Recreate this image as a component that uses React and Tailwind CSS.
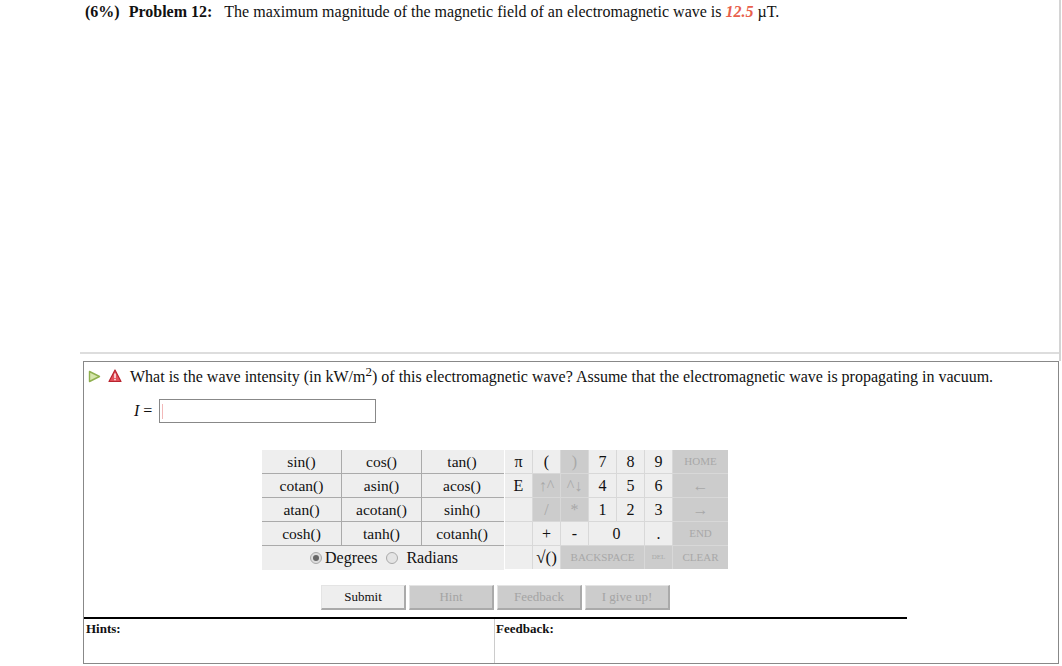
import React from 'react';

const funcs = ['sin()', 'cos()', 'tan()', 'cotan()', 'asin()', 'acos()', 'atan()', 'acotan()', 'sinh()', 'cosh()', 'tanh()', 'cotanh()'];

const onCell = 'flex items-center justify-center bg-[#eeeeee] text-[#111]';
const offCell = 'flex items-center justify-center bg-[#cccccc] text-[#a8a8a8]';

const Key = ({ off, className = '', children }) => (
  <div className={`${off ? offCell : onCell} ${className}`}>{children}</div>
);

const ActionButton = ({ off, children }) => (
  <div
    className={`w-[85px] h-[25px] flex items-center justify-center text-[13px] border-t border-l border-t-[#e4e4e4] border-l-[#e4e4e4] border-b-2 border-r-2 border-b-[#aaa] border-r-[#aaa] ${
      off ? 'bg-[#cccccc] text-[#a4a4a4]' : 'bg-[#eeeeee] text-[#111]'
    }`}
  >
    {children}
  </div>
);

const App = () => {
  return (
    <div className="w-[1062px] h-[666px] overflow-hidden bg-white text-[#111] font-['Liberation_Serif',serif] text-[16px]">
      <div className="w-[1061px] border-r-2 border-[#d4d4d4]">
        <div className="h-[352px] pl-[85px] pt-[3px] leading-[18px] whitespace-nowrap">
          <b>(6%)</b>
          <b className="ml-[9px]">Problem 12:</b>
          <span className="ml-[12px]">The maximum magnitude of the magnetic field of an electromagnetic wave is </span>
          <i className="text-[#e8604c] font-bold">12.5</i> µT.
        </div>
        <div className="ml-[80px] h-[2px] bg-[#dddddd]" />
        <div className="h-[7px]" />
      </div>

      <div className="ml-[83px] w-[976px] h-[303px] border border-[#888888] flex flex-col">
        <div className="flex items-start pt-[6px] h-[37px]">
          <svg className="ml-[4px] mt-[2px]" width="13" height="13" viewBox="0 0 13 13">
            <path d="M1.5 1.5 L11.5 6.5 L1.5 11.5 Z" fill="#d6e6ad" stroke="#8fb04f" strokeWidth="1.4" strokeLinejoin="round" />
          </svg>
          <svg className="ml-[7px] mt-[1px]" width="14" height="14" viewBox="0 0 14 14">
            <path d="M7 1 L13 12.5 L1 12.5 Z" fill="#e2505a" stroke="#b8232e" strokeWidth="1.2" strokeLinejoin="round" />
            <rect x="6.3" y="4.5" width="1.4" height="4.5" fill="#fff" />
            <rect x="6.3" y="9.8" width="1.4" height="1.5" fill="#fff" />
          </svg>
          <p className="ml-[8px] leading-[18px] whitespace-nowrap">
            What is the wave intensity (in kW/m<sup className="text-[13px] leading-none">2</sup>) of this electromagnetic wave? Assume that the electromagnetic wave is propagating in vacuum.
          </p>
        </div>

        <div className="flex items-center h-[24px] ml-[50px]">
          <span className="w-[25px]"><i>I</i> =</span>
          <div className="w-[217px] h-[24px] border border-[#888888] flex items-center pl-[2px]">
            <div className="w-px h-[15px] bg-[#f2b8b8]" />
          </div>
        </div>

        <div className="flex ml-[178px] mt-[27px]">
          <div className="w-[242px] h-[120px] bg-[#eeeeee] flex flex-col">
            <div className="grid grid-cols-[80px_80px_82px] grid-rows-[24px_24px_24px_24px]">
              {funcs.map((f) => (
                <div key={f} className="flex items-center justify-center border-r border-b border-[#aaaaaa] [&:nth-child(3n)]:border-r-0 [&:nth-child(3n)]:pr-[2px] text-[15.5px]">
                  {f}
                </div>
              ))}
            </div>
            <div className="flex-1 flex items-center pl-[48px] gap-[3px] pb-[4px]">
              <span className="w-[12px] h-[12px] rounded-full border border-[#aaa] bg-[#ddd] flex items-center justify-center">
                <span className="w-[6px] h-[6px] rounded-full bg-[#666]" />
              </span>
              <span>Degrees</span>
              <span className="ml-[6px] mr-[5px] w-[12px] h-[12px] rounded-full border border-[#aaa] bg-[#e4e4e4]" />
              <span>Radians</span>
            </div>
          </div>

          <div className="ml-[1px] w-[223px] h-[119px] grid grid-cols-[27px_27px_27px_27px_27px_27px_55px] grid-rows-[23px_23px_23px_23px_23px] gap-px bg-[#d8d8d8] text-[16px]">
            <Key>π</Key>
            <Key>(</Key>
            <Key off>)</Key>
            <Key>7</Key>
            <Key>8</Key>
            <Key>9</Key>
            <Key off className="text-[11px]">HOME</Key>

            <Key>E</Key>
            <Key off>↑^</Key>
            <Key off>^↓</Key>
            <Key>4</Key>
            <Key>5</Key>
            <Key>6</Key>
            <Key off>←</Key>

            <Key />
            <Key off>/</Key>
            <Key off>*</Key>
            <Key>1</Key>
            <Key>2</Key>
            <Key>3</Key>
            <Key off>→</Key>

            <Key />
            <Key>+</Key>
            <Key>-</Key>
            <Key className="col-span-2">0</Key>
            <Key>.</Key>
            <Key off className="text-[11px]">END</Key>

            <Key />
            <Key className="text-[17px] whitespace-nowrap">√()</Key>
            <Key off className="col-span-3 text-[11px]">BACKSPACE</Key>
            <Key off className="text-[7px]">DEL</Key>
            <Key off className="text-[11px]">CLEAR</Key>
          </div>
        </div>

        <div className="flex ml-[237px] mt-[15px] gap-[3px]">
          <ActionButton>Submit</ActionButton>
          <ActionButton off>Hint</ActionButton>
          <ActionButton off>Feedback</ActionButton>
          <ActionButton off>I give up!</ActionButton>
        </div>

        <div className="mt-[7px] w-[823px] flex-1 border-t-2 border-black flex text-[13px] font-bold leading-[16px]">
          <div className="w-[410px] pl-[2px] pt-[2px]">Hints:</div>
          <div className="flex-1 border-l border-[#cccccc] pl-[1px] pt-[2px]">Feedback:</div>
        </div>
      </div>
    </div>
  );
};

export default App;
